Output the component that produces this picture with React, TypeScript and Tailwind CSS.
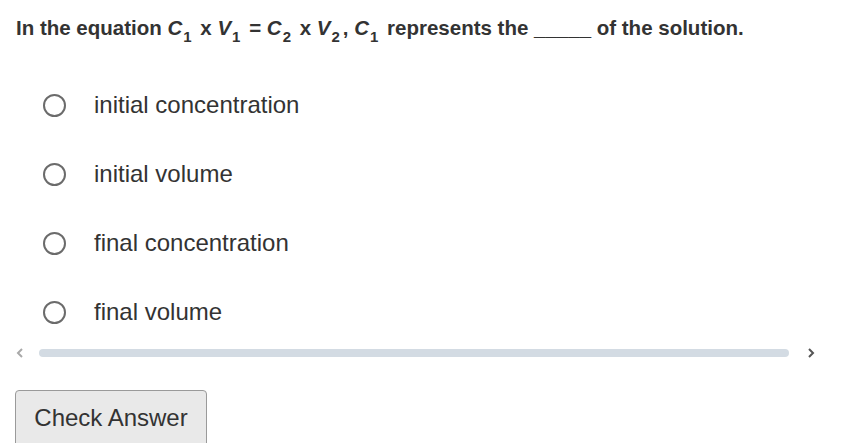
import { useState } from "react";

const options = [
  "initial concentration",
  "initial volume",
  "final concentration",
  "final volume",
];

function Sub({ children }: { children: React.ReactNode }) {
  return <sub className="text-[15px] align-[-3px] font-bold not-italic ml-[1px] mr-[3px]">{children}</sub>;
}

export default function App() {
  const [picked, setPicked] = useState<number | null>(null);

  return (
    <div className="w-[863px] h-[443px] overflow-hidden bg-white text-[#333] font-['Liberation_Sans',Arial,sans-serif]">
      <p className="pl-4 pt-[17px] text-[20.5px] font-bold leading-[22px]">
        In the equation <i>C</i>
        <Sub>1</Sub> x <i>V</i>
        <Sub>1</Sub> = <i>C</i>
        <Sub>2</Sub> x <i>V</i>
        <Sub>2</Sub>, <i>C</i>
        <Sub>1</Sub> represents the _____ of the solution.
      </p>

      <div className="mt-[54px] flex flex-col gap-[45px] pl-[43px]">
        {options.map((opt, i) => (
          <label key={opt} className="flex items-center h-[24px] cursor-pointer" onClick={() => setPicked(i)}>
            <span className="w-[23px] h-[23px] rounded-full border-2 border-[#6b6b6b] flex items-center justify-center">
              {picked === i && <span className="w-[11px] h-[11px] rounded-full bg-[#333]" />}
            </span>
            <span className="ml-[28px] text-[24px]">{opt}</span>
          </label>
        ))}
      </div>

      <div className="mt-[23px] flex items-center h-[12px]">
        <span className="w-[39px] flex justify-center pl-[1px]">
          <svg width="8" height="10" viewBox="0 0 8 10">
            <path d="M6 1 L2 5 L6 9" fill="none" stroke="#a9a9a9" strokeWidth="2" />
          </svg>
        </span>
        <div className="w-[750px] h-[8px] rounded-full bg-[#d3dbe3]" />
        <span className="ml-[18px]">
          <svg width="8" height="10" viewBox="0 0 8 10">
            <path d="M2 1 L6 5 L2 9" fill="none" stroke="#555" strokeWidth="2" />
          </svg>
        </span>
      </div>

      <div className="mt-[31px] pl-[15px]">
        <button className="w-[192px] h-[60px] pb-[5px] rounded-[4px] border border-[#9a9a9a] bg-[#e9e9e9] text-[24px] text-[#333]">
          Check Answer
        </button>
      </div>
    </div>
  );
}
